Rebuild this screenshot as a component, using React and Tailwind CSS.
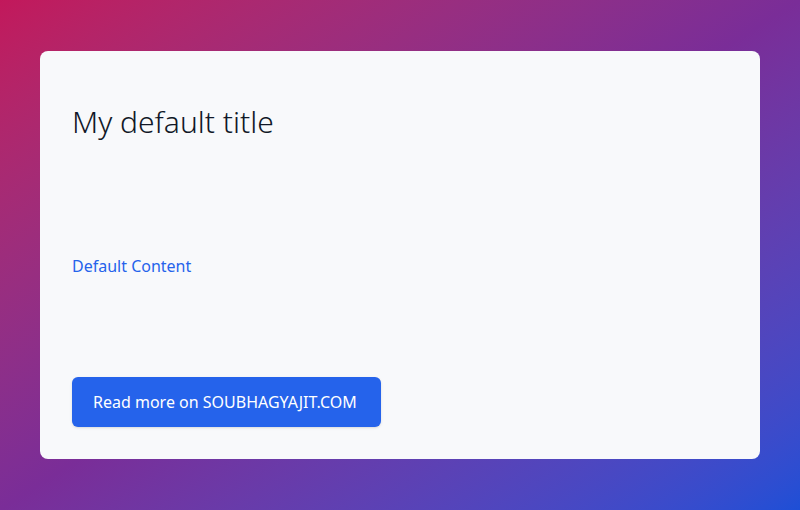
export default function App() {
  return (
    <div
      className="w-[800px] h-[510px] bg-gradient-to-br from-[#c2185b] via-[#7a2d98] to-[#1d4fd6] px-10 pt-[51px] pb-[51px]"
      style={{ fontFamily: '"Noto Sans", sans-serif' }}
    >
      <div className="h-full w-full bg-[#f8f9fb] rounded-lg px-8 pt-8 pb-8 flex flex-col">
        <h1 className="mt-[21px] text-[30px] leading-[36px] text-[#111827] font-light">
          My default title
        </h1>
        <p className="mt-[114px] text-base leading-6 text-[#2563eb]">Default Content</p>
        <div className="mt-auto">
          <button className="bg-[#2563eb] text-white text-base leading-6 pl-[21px] pr-[24px] py-[13px] rounded-md shadow-sm">
            Read more on SOUBHAGYAJIT.COM
          </button>
        </div>
      </div>
    </div>
  );
}
